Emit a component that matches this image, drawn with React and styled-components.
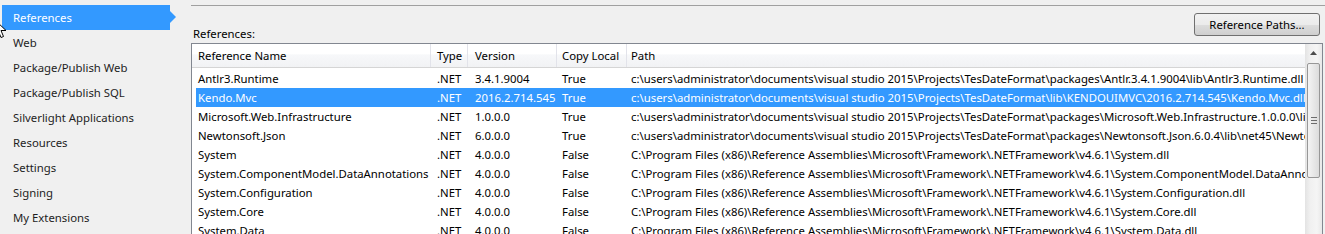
import React from "react";
import styled, { createGlobalStyle, css } from "styled-components";

const GlobalStyle = createGlobalStyle`
  html, body {
    margin: 0;
    padding: 0;
    background: #f0f0f0;
    overflow: hidden;
  }
`;

const FONT = `"Noto Sans", "Open Sans", Arial, sans-serif`;
const SIZE = "11.35px";

const Page = styled.div`
  position: relative;
  display: flex;
  width: 1325px;
  height: 234px;
  overflow: hidden;
  background: #f0f0f0;
  font-family: ${FONT};
  font-size: ${SIZE};
  color: #000;
`;

const Sidebar = styled.nav`
  flex: none;
  width: 180px;
  padding-top: 5px;
  display: flex;
  flex-direction: column;
`;

const NavItem = styled.div`
  position: relative;
  height: 25px;
  line-height: 25px;
  width: 168px;
  margin-left: 2px;
  padding-left: 11px;
  box-sizing: border-box;
  color: #1e1e1e;
  white-space: nowrap;

  ${(p) =>
    p.$active &&
    css`
      background: #3399ff;
      color: #fff;

      &::after {
        content: "";
        position: absolute;
        right: -6px;
        top: 6px;
        border-left: 6px solid #3399ff;
        border-top: 6px solid transparent;
        border-bottom: 6px solid transparent;
      }
    `}
`;

const Cursor = styled.svg`
  position: absolute;
  left: -6px;
  top: 19px;
`;

const Main = styled.section`
  flex: 1;
  min-width: 0;
  margin-left: 11px;
  margin-top: 5px;
  border-top: 1px solid #a0a0a0;
  display: flex;
  flex-direction: column;
`;

const TopBar = styled.div`
  height: 37px;
  display: flex;
  justify-content: space-between;
  padding: 7px 5px 0 2px;
  box-sizing: border-box;
`;

const Label = styled.div`
  align-self: flex-end;
  margin-bottom: 2px;
`;

const Button = styled.button`
  height: 23px;
  width: 126px;
  border: 1px solid #707070;
  border-radius: 3px;
  background: linear-gradient(#f2f2f2 0%, #ebebeb 50%, #dddddd 51%, #cfcfcf 100%);
  font-family: ${FONT};
  font-size: ${SIZE};
  color: #000;
  padding: 0;
`;

const ListBox = styled.div`
  flex: 1;
  display: flex;
  margin-right: 2px;
  border: 1px solid #828790;
  border-bottom: none;
  background: #fff;
  min-height: 0;
`;

const Table = styled.div`
  flex: 1;
  min-width: 0;
  overflow: hidden;
`;

const COLS = "37px 89px 70px 1fr";

const HeaderRow = styled.div`
  display: grid;
  grid-template-columns: 239px ${COLS};
  height: 23px;
  border-bottom: 1px solid #d5d5d5;
  background: linear-gradient(#ffffff 0%, #ffffff 45%, #f7f8fa 46%, #f1f2f4 100%);
  margin-bottom: 1px;
`;

const HeaderCell = styled.div`
  line-height: 23px;
  padding-left: ${(p) => p.$pad ?? 6}px;
  border-right: 1px solid #e2e3ea;
  white-space: nowrap;
  overflow: hidden;

  &:last-child {
    border-right: none;
  }
`;

const Row = styled.div`
  display: grid;
  grid-template-columns: 235px ${COLS};
  height: 19px;
  margin-left: 4px;
  background: ${(p) => (p.$selected ? "#3399ff" : "transparent")};
  color: ${(p) => (p.$selected ? "#fff" : "#000")};
`;

const Cell = styled.div`
  line-height: 19px;
  padding-left: ${(p) => p.$pad ?? 2}px;
  white-space: nowrap;
  overflow: hidden;
  text-overflow: clip;
`;

const ScrollBar = styled.div`
  flex: none;
  width: 17px;
  display: flex;
  flex-direction: column;
  align-items: center;
  background: linear-gradient(90deg, #e3e3e3, #f0f0f0 30%, #f5f5f5 70%, #e8e8e8);
`;

const ArrowBtn = styled.div`
  height: 17px;
  width: 17px;
  display: flex;
  align-items: center;
  justify-content: center;
`;

const Thumb = styled.div`
  width: 13px;
  height: 115px;
  margin-top: 2px;
  box-sizing: border-box;
  border: 1px solid #979797;
  border-radius: 2px;
  background: linear-gradient(90deg, #f4f4f4, #e8e8e8 50%, #dcdcdc);
  display: flex;
  align-items: center;
  justify-content: center;
`;

const Grip = styled.div`
  width: 6px;
  height: 5px;
  border-top: 1px solid #6c6c6c;
  border-bottom: 1px solid #6c6c6c;
  position: relative;

  &::after {
    content: "";
    position: absolute;
    left: 0;
    right: 0;
    top: 2px;
    border-top: 1px solid #6c6c6c;
  }
`;

const navItems = [
  "References",
  "Web",
  "Package/Publish Web",
  "Package/Publish SQL",
  "Silverlight Applications",
  "Resources",
  "Settings",
  "Signing",
  "My Extensions",
];

const PROJ = "c:\\users\\administrator\\documents\\visual studio 2015\\Projects\\TesDateFormat\\";
const FW = "C:\\Program Files (x86)\\Reference Assemblies\\Microsoft\\Framework\\.NETFramework\\v4.6.1\\";

const references = [
  { name: "Antlr3.Runtime", version: "3.4.1.9004", copy: "True", path: PROJ + "packages\\Antlr.3.4.1.9004\\lib\\Antlr3.Runtime.dll" },
  { name: "Kendo.Mvc", version: "2016.2.714.545", copy: "True", path: PROJ + "lib\\KENDOUIMVC\\2016.2.714.545\\Kendo.Mvc.dll", selected: true },
  { name: "Microsoft.Web.Infrastructure", version: "1.0.0.0", copy: "True", path: PROJ + "packages\\Microsoft.Web.Infrastructure.1.0.0.0\\lib\\net40\\Microsoft.Web.Infrastructure.dll" },
  { name: "Newtonsoft.Json", version: "6.0.0.0", copy: "True", path: PROJ + "packages\\Newtonsoft.Json.6.0.4\\lib\\net45\\Newtonsoft.Json.dll" },
  { name: "System", version: "4.0.0.0", copy: "False", path: FW + "System.dll" },
  { name: "System.ComponentModel.DataAnnotations", version: "4.0.0.0", copy: "False", path: FW + "System.ComponentModel.DataAnnotations.dll" },
  { name: "System.Configuration", version: "4.0.0.0", copy: "False", path: FW + "System.Configuration.dll" },
  { name: "System.Core", version: "4.0.0.0", copy: "False", path: FW + "System.Core.dll" },
  { name: "System.Data", version: "4.0.0.0", copy: "False", path: FW + "System.Data.dll" },
];

const App = () => (
  <Page>
    <GlobalStyle />
    <Sidebar>
      {navItems.map((item, i) => (
        <NavItem key={item} $active={i === 0}>
          {item}
        </NavItem>
      ))}
    </Sidebar>
    <Cursor width="14" height="20" viewBox="0 0 14 20">
      <path d="M1 1 L1 16 L4.5 12.5 L7 18.5 L9.5 17.5 L7 11.5 L12 11.5 Z" fill="#fff" stroke="#000" strokeWidth="1" />
    </Cursor>
    <Main>
      <TopBar>
        <Label>References:</Label>
        <Button type="button">Reference Paths...</Button>
      </TopBar>
      <ListBox>
        <Table>
          <HeaderRow>
            <HeaderCell>Reference Name</HeaderCell>
            <HeaderCell>Type</HeaderCell>
            <HeaderCell $pad={7}>Version</HeaderCell>
            <HeaderCell $pad={5}>Copy Local</HeaderCell>
            <HeaderCell $pad={4}>Path</HeaderCell>
          </HeaderRow>
          {references.map((r) => (
            <Row key={r.name} $selected={r.selected}>
              <Cell>{r.name}</Cell>
              <Cell $pad={6}>.NET</Cell>
              <Cell $pad={7}>{r.version}</Cell>
              <Cell $pad={5}>{r.copy}</Cell>
              <Cell $pad={4}>{r.path}</Cell>
            </Row>
          ))}
        </Table>
        <ScrollBar>
          <ArrowBtn>
            <svg width="7" height="4" viewBox="0 0 7 4">
              <path d="M0 4 L3.5 0 L7 4 Z" fill="#4d4d4d" />
            </svg>
          </ArrowBtn>
          <Thumb>
            <Grip />
          </Thumb>
        </ScrollBar>
      </ListBox>
    </Main>
  </Page>
);

export default App;
